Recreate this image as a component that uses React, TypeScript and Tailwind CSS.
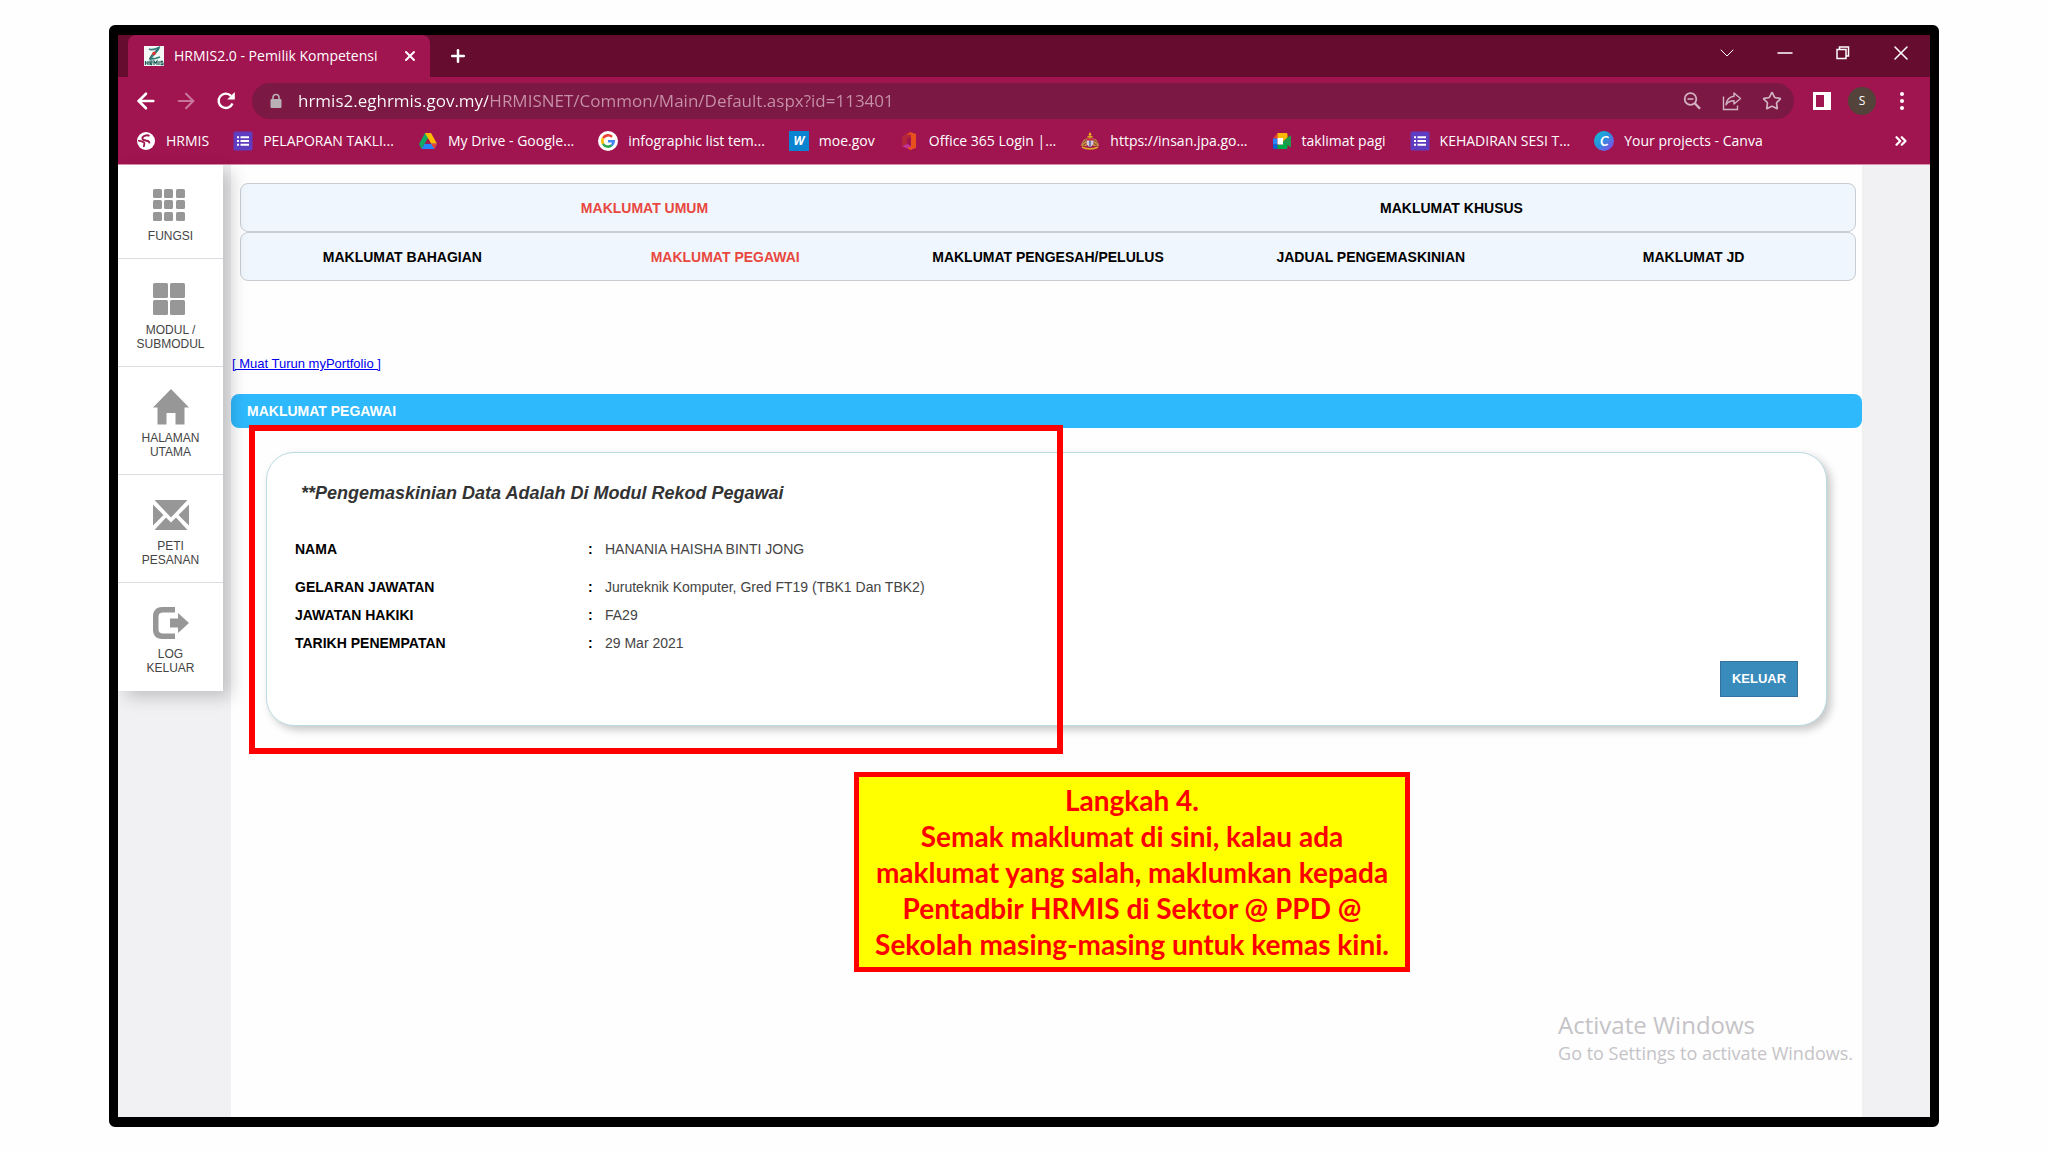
import type { ReactNode } from 'react';
import { ArrowLeft, ArrowRight, ChevronDown, ChevronsRight, Minus, Plus, Star, X } from 'lucide-react';
import clsx from 'clsx';

const mainTabs = [
  { label: 'MAKLUMAT UMUM', active: true },
  { label: 'MAKLUMAT KHUSUS', active: false },
];

const subTabs = [
  { label: 'MAKLUMAT BAHAGIAN', active: false },
  { label: 'MAKLUMAT PEGAWAI', active: true },
  { label: 'MAKLUMAT PENGESAH/PELULUS', active: false },
  { label: 'JADUAL PENGEMASKINIAN', active: false },
  { label: 'MAKLUMAT JD', active: false },
];

const details = [
  { label: 'NAMA', value: 'HANANIA HAISHA BINTI JONG' },
  { label: 'GELARAN JAWATAN', value: 'Juruteknik Komputer, Gred FT19 (TBK1 Dan TBK2)' },
  { label: 'JAWATAN HAKIKI', value: 'FA29' },
  { label: 'TARIKH PENEMPATAN', value: '29 Mar 2021' },
];

/* ---------- bookmark icons ---------- */

function GlobeIcon() {
  return (
    <svg viewBox="0 0 20 20" className="size-5">
      <circle cx="10" cy="10" r="9" fill="#fff" />
      <path d="M13.500 5C11.500 3.800 7.500 4.300 6.500 6.500c-.8 2.500 1.500 3 4 3.200 2 .2 3 .8 2.800 2.600" fill="none" stroke="#a0144f" strokeWidth="2" />
      <path d="M2 9.500c2 .6 5 .6 6.200 2.200.8 1.500-.7 2.300-.2 4.300" fill="none" stroke="#a0144f" strokeWidth="1.800" />
    </svg>
  );
}

function FormsIcon() {
  return (
    <svg viewBox="0 0 20 20" className="size-5">
      <rect x="0.500" y="0.500" width="19" height="19" rx="1.500" fill="#5f3dc0" />
      <path d="M7.500 6.200h8.500M7.500 10h8.500M7.500 13.800h8.500" stroke="#fff" strokeWidth="2" />
      <path d="M4 6.200h2M4 10h2M4 13.800h2" stroke="#fff" strokeWidth="2" />
    </svg>
  );
}

function DriveIcon() {
  return (
    <svg viewBox="0 0 20 20" className="size-5">
      <path d="M7 2h6l-6.500 11.300L3.600 18 1 13z" fill="#11a861" />
      <path d="M7 2h6l6 10.800h-6z" fill="#ffba00" />
      <path d="M6.700 12.800H19L16.300 18H3.600z" fill="#2684fc" />
      <path d="M13 12.800h6L16.300 18z" fill="#ea4335" />
      <path d="M10 7.400l3 5.400H7z" fill="#a0144f" />
    </svg>
  );
}

function GoogleIcon() {
  return (
    <svg viewBox="0 0 20 20" className="size-5">
      <circle cx="10" cy="10" r="10" fill="#fff" />
      <g fill="none" strokeWidth="2.600">
        <path d="M5.100 7.200A5.700 5.700 0 0 1 14 5.900" stroke="#ea4335" />
        <path d="M5.100 12.800a5.700 5.700 0 0 1 0-5.600" stroke="#fbbc05" />
        <path d="M13.700 14.300a5.700 5.700 0 0 1-8.600-1.500" stroke="#34a853" />
        <path d="M10 10.200h5.700a5.700 5.700 0 0 1-2 4.100" stroke="#4285f4" />
      </g>
    </svg>
  );
}

function WordpadIcon() {
  return (
    <span className="flex size-5 items-center justify-center bg-[#0a84d0] font-['Open_Sans',sans-serif] text-xs font-bold italic text-white">W</span>
  );
}

function OfficeIcon() {
  return (
    <svg viewBox="0 0 20 20" className="size-5">
      <path d="M3 5.500 9.500 1 12 2v4L8 7.500v6l-5 2z" fill="#b3263a" />
      <path d="M3 15.500 8 13l5 2.500V19z" fill="#c2339b" />
      <path d="M11 1l6 2v14l-6 2-3-2.500 4-.5V3.500L8 4z" fill="#e8501c" />
    </svg>
  );
}

function CrestIcon() {
  return (
    <svg viewBox="0 0 20 20" className="size-5">
      <path d="M10 1l1.500 3h-3z" fill="#f2c21a" />
      <path d="M6.500 6 10 4l3.500 2-3.500 1z" fill="#e0a31c" />
      <path d="M1 15c.5-3.500 2-6 4.500-7.500L7 15zM19 15c-.5-3.500-2-6-4.500-7.500L13 15z" fill="#c98a4a" />
      <path d="M2.500 12l3.500-3M3 14.500l3.500-2.500M17.500 12 14 9M17 14.500 13.500 12" stroke="#6b4423" strokeWidth="0.900" />
      <path d="M6.500 7.500h7v4.500c0 2-2 3.500-3.500 4-1.500-.5-3.500-2-3.500-4z" fill="#d9c9d4" />
      <path d="M6.500 7.500h7v2h-7z" fill="#c62828" />
      <path d="M10 9.500v6" stroke="#4a5aa8" strokeWidth="1.500" />
      <path d="M2 16c4 2.500 12 2.500 16 0" fill="none" stroke="#dba52a" strokeWidth="1.800" />
    </svg>
  );
}

function MeetIcon() {
  return (
    <svg viewBox="0 0 20 20" className="size-5">
      <path d="M1 7.500 5.500 2v5.500z" fill="#ea4335" />
      <path d="M1 7.500h4.500v6H1z" fill="#2684fc" />
      <path d="M1 13.500h4.500V18H2.500A1.500 1.500 0 0 1 1 16.500z" fill="#0066da" />
      <path d="M5.500 2H14c1 0 1.500.7 1.500 1.500v5L11 11V7H5.500z" fill="#ffba00" />
      <path d="M5.500 13.500H11v-3l4.500 3v3c0 1-.6 1.500-1.500 1.500H5.500z" fill="#00ac47" />
      <path d="M11 10.200 18 4.500c.5-.3 1 0 1 .5v10.500c0 .5-.5.700-1 .4z" fill="#1f9a48" />
      <path d="M5.500 7H11v6.500H5.500z" fill="#fff" />
    </svg>
  );
}

function CanvaIcon() {
  return (
    <span className="flex size-5 items-center justify-center rounded-full bg-linear-to-br from-[#00c4cc] via-[#2a8be0] to-[#7d2ae8] font-['Lato',sans-serif] text-sm font-bold italic text-white">C</span>
  );
}

const bookmarks: { label: string; icon: ReactNode }[] = [
  { label: 'HRMIS', icon: <GlobeIcon /> },
  { label: 'PELAPORAN TAKLI...', icon: <FormsIcon /> },
  { label: 'My Drive - Google...', icon: <DriveIcon /> },
  { label: 'infographic list tem...', icon: <GoogleIcon /> },
  { label: 'moe.gov', icon: <WordpadIcon /> },
  { label: 'Office 365 Login |...', icon: <OfficeIcon /> },
  { label: 'https://insan.jpa.go...', icon: <CrestIcon /> },
  { label: 'taklimat pagi', icon: <MeetIcon /> },
  { label: 'KEHADIRAN SESI T...', icon: <FormsIcon /> },
  { label: 'Your projects - Canva', icon: <CanvaIcon /> },
];

/* ---------- browser chrome ---------- */

function Favicon() {
  return (
    <svg viewBox="0 0 20 20" className="size-5">
      <rect width="20" height="20" fill="#f4f7f6" />
      <path d="M5 3c3 1.500 6 .5 10-1.500C14 6 8 9 6.500 13c2.500 0 6-.5 9.500-2" fill="none" stroke="#2f7f78" strokeWidth="1.800" />
      <path d="M13.500 3.500C10 6 7 9 5.500 13" fill="none" stroke="#24404a" strokeWidth="1" />
      <circle cx="10" cy="7.500" r="1.800" fill="#e3322b" />
      <path d="M1.500 15v4M4 15v4M1.500 17H4M6 19v-4h2v2H6l2 2M10 19v-4l1.500 2 1.500-2v4M15 15v4M19 15.300h-2v1.700h2v1.700h-2.500" fill="none" stroke="#1d5f58" strokeWidth="1.200" />
    </svg>
  );
}

function ReloadIcon() {
  return (
    <svg viewBox="0 0 20 20" className="size-5">
      <path d="M16.500 12.500A7.200 7.200 0 1 1 15 4.800" fill="none" stroke="#fff" strokeWidth="2.400" />
      <path d="M18.800 1v7.600h-7.600z" fill="#fff" />
    </svg>
  );
}

function ZoomIcon() {
  return (
    <svg viewBox="0 0 20 20" className="size-5" fill="none" stroke="currentColor">
      <circle cx="8.500" cy="8" r="5.800" strokeWidth="1.800" />
      <path d="M5.500 8h6" strokeWidth="1.600" />
      <path d="M12.800 12.300 18 17.800" strokeWidth="2.400" />
    </svg>
  );
}

function ShareIcon() {
  return (
    <svg viewBox="0 0 20 20" className="size-5" fill="none" stroke="currentColor" strokeWidth="1.400">
      <path d="M1.500 5.500v13h14v-4" />
      <path d="M12 2l6.500 5.500L12 13v-3.200c-3.500 0-6 1-8 4 .5-4.500 3.500-8 8-8.600z" strokeLinejoin="round" />
    </svg>
  );
}

function TabStrip() {
  return (
    <div className="flex h-[42px] items-stretch justify-between bg-[#660c2e] text-white">
      <div className="flex pl-[10px]">
        <div className="flex w-[302px] items-center rounded-t-lg bg-[#a0144f] pl-4 pr-3">
          <Favicon />
          <span className="ml-[10px] flex-1 whitespace-nowrap text-sm">HRMIS2.0 - Pemilik Kompetensi</span>
          <button type="button" aria-label="Close tab">
            <X className="size-4" strokeWidth={3} />
          </button>
        </div>
        <button type="button" aria-label="New tab" className="ml-[18px]">
          <Plus className="size-5" strokeWidth={3} />
        </button>
      </div>
      <div className="flex items-center gap-[34px] pr-[17px] pb-[6px]">
        <button type="button" aria-label="Search tabs">
          <ChevronDown className="size-6" strokeWidth={1} />
        </button>
        <button type="button" aria-label="Minimise">
          <Minus className="size-6" strokeWidth={1.5} />
        </button>
        <button type="button" aria-label="Restore">
          <svg viewBox="0 0 24 24" className="size-6" fill="none" stroke="currentColor" strokeWidth="1.500">
            <path d="M6 8.500h9v9H6z" />
            <path d="M8.500 8.500V6h9v9H15" />
          </svg>
        </button>
        <button type="button" aria-label="Close">
          <X className="size-6" strokeWidth={1.5} />
        </button>
      </div>
    </div>
  );
}

function Toolbar() {
  return (
    <div className="flex h-[46px] items-center px-[18px] pt-[2px] text-white">
      <div className="flex items-center gap-5">
        <button type="button" aria-label="Back">
          <ArrowLeft className="size-5 scale-125" strokeWidth={2.5} />
        </button>
        <button type="button" aria-label="Forward" className="text-[#c9759a]">
          <ArrowRight className="size-5 scale-125" strokeWidth={2} />
        </button>
        <button type="button" aria-label="Reload">
          <ReloadIcon />
        </button>
      </div>
      <div className="ml-4 flex h-9 flex-1 items-center rounded-full bg-[#7b1843] pl-[18px] pr-3 text-[#d3b3c2]">
        <svg viewBox="0 0 12 16" className="h-4 w-3">
          <path d="M3 7V4.500a3 3 0 0 1 6 0V7" fill="none" stroke="#b9b0b6" strokeWidth="1.600" />
          <rect x="0.500" y="6" width="11" height="9" rx="1" fill="#b9b0b6" />
        </svg>
        <input
          type="text"
          aria-label="Address"
          readOnly
          value="hrmis2.eghrmis.gov.my/HRMISNET/Common/Main/Default.aspx?id=113401"
          className="ml-4 min-w-0 flex-1 bg-linear-to-r from-white from-[190px] to-[#c791ab] to-[190px] bg-clip-text text-[17px] leading-6 text-transparent outline-none"
        />
        <div className="flex items-center gap-5">
          <button type="button" aria-label="Zoom">
            <ZoomIcon />
          </button>
          <button type="button" aria-label="Share">
            <ShareIcon />
          </button>
          <button type="button" aria-label="Bookmark this page">
            <Star className="size-5" strokeWidth={2} />
          </button>
        </div>
      </div>
      <div className="ml-[18px] flex items-center gap-4">
        <button type="button" aria-label="Side panel">
          <svg viewBox="0 0 20 20" className="size-5">
            <path d="M1 1h18v18H1zM4 4v12h8V4z" fill="#fff" fillRule="evenodd" />
          </svg>
        </button>
        <button type="button" aria-label="Profile" className="size-7 rounded-full bg-[#54433a] text-xs">
          S
        </button>
        <button type="button" aria-label="Menu">
          <svg viewBox="0 0 20 20" className="size-5" fill="#fff">
            <circle cx="10" cy="3" r="2" />
            <circle cx="10" cy="10" r="2" />
            <circle cx="10" cy="17" r="2" />
          </svg>
        </button>
      </div>
    </div>
  );
}

function BookmarkBar() {
  return (
    <div className="flex h-[41px] items-center justify-between pb-[6px] pl-[18px] pr-5 text-white">
      <div className="flex items-center gap-6">
        {bookmarks.map((item) => (
          <a key={item.label} href="#" className="flex items-center gap-[10px] whitespace-nowrap text-sm">
            {item.icon}
            {item.label}
          </a>
        ))}
      </div>
      <button type="button" aria-label="More bookmarks">
        <ChevronsRight className="size-[18px]" strokeWidth={3} />
      </button>
    </div>
  );
}

/* ---------- side menu ---------- */

const sideMenu: { lines: string[]; icon: ReactNode }[] = [
  {
    lines: ['FUNGSI'],
    icon: (
      <svg viewBox="0 0 32 32" className="size-8" fill="#979797">
        {[0, 11, 23].map((y) =>
          [0, 11, 23].map((x) => <rect key={`${x}-${y}`} x={x} y={y} width="9" height="9" rx="1.500" />)
        )}
      </svg>
    ),
  },
  {
    lines: ['MODUL /', 'SUBMODUL'],
    icon: (
      <svg viewBox="0 0 32 32" className="size-8" fill="#979797">
        <rect width="15" height="15" rx="1.500" />
        <rect x="17" width="15" height="15" rx="1.500" />
        <rect y="17" width="15" height="15" rx="1.500" />
        <rect x="17" y="17" width="15" height="15" rx="1.500" />
      </svg>
    ),
  },
  {
    lines: ['HALAMAN', 'UTAMA'],
    icon: (
      <svg viewBox="0 0 36 36" className="size-9" fill="#979797">
        <path d="M18 0 36 18.500h-4.500V35.500H22.500V24h-9v11.500H4.500V18.500H0z" />
      </svg>
    ),
  },
  {
    lines: ['PETI', 'PESANAN'],
    icon: (
      <svg viewBox="0 0 36 30" className="h-[30px] w-9" fill="#979797">
        <path d="M1.500 0h33L18 17.500z" />
        <path d="M0 4.500 10.500 15 0 25.500zM36 4.500 25.500 15 36 25.500z" />
        <path d="M1.500 30 13 17.500l5 5 5-5L34.500 30z" />
      </svg>
    ),
  },
  {
    lines: ['LOG', 'KELUAR'],
    icon: (
      <svg viewBox="0 0 36 32" className="h-8 w-9" fill="#979797">
        <path d="M22 0v5.500H10C7 5.500 5.500 7 5.500 9.500v13C5.500 25 7 26.500 10 26.500h12V32H9c-6 0-9-4-9-9V9c0-5 3-9 9-9z" />
        <path d="M17 11.500h8V6l11 10-11 10v-5.500h-8z" />
      </svg>
    ),
  },
];

function SideMenu() {
  return (
    <nav className="relative z-10 w-[105px] shrink-0 bg-white shadow-[8px_6px_16px_rgba(0,0,0,0.2)]">
      {sideMenu.map((item) => (
        <a
          key={item.lines[0]}
          href="#"
          className="flex flex-col items-center border-b border-[#dcdce2] pb-[15px] pt-5 text-center text-xs leading-[14px] text-[#444] last:border-transparent"
        >
          <span className="mb-1 flex h-10 w-9 items-center">{item.icon}</span>
          {item.lines.map((line) => (
            <span key={line}>{line}</span>
          ))}
        </a>
      ))}
    </nav>
  );
}

/* ---------- page ---------- */

function TabRow({ tabs }: { tabs: { label: string; active: boolean }[] }) {
  return (
    <div className="flex h-[49px] items-center rounded-lg border border-[#c9cdd1] bg-[#f0f6fd]">
      {tabs.map((tab) => (
        <a
          key={tab.label}
          href="#"
          className={clsx('flex-1 text-center font-bold', tab.active ? 'text-[#e8483f]' : 'text-black')}
        >
          {tab.label}
        </a>
      ))}
    </div>
  );
}

function OfficerCard() {
  return (
    <div className="mx-[35px] mt-6 rounded-[28px] border border-[#b9dbe2] bg-white p-7 shadow-[4px_4px_8px_rgba(0,0,0,0.22)]">
      <h2 className="pl-[6px] text-lg leading-6 font-bold italic text-[#333]">
        **Pengemaskinian Data Adalah Di Modul Rekod Pegawai
      </h2>
      <dl className="mt-[34px] flex flex-col gap-2 leading-5">
        {details.map((row) => (
          <div key={row.label} className="flex first:mb-[10px]">
            <dt className="flex w-[310px] font-bold text-black">
              <span className="w-[293px]">{row.label}</span>:
            </dt>
            <dd className="text-[#444]">{row.value}</dd>
          </div>
        ))}
      </dl>
      <div className="mt-2 flex justify-end">
        <button type="button" className="h-9 w-[78px] border border-[#35719c] bg-[#398bbb] text-[13px] font-bold text-white">
          KELUAR
        </button>
      </div>
    </div>
  );
}

function Callout() {
  return (
    <div className="absolute left-[623px] top-[378px] w-[556px] border-5 border-[#f00] bg-[#ff0] py-[5px] text-center font-['Lato',sans-serif] text-[28px] leading-9 font-bold whitespace-nowrap text-[#f00]">
      <p>Langkah 4.</p>
      <p>
        Semak maklumat di sini, kalau ada
        <br />
        maklumat yang salah, maklumkan kepada
        <br />
        Pentadbir HRMIS di Sektor @ PPD @
        <br />
        Sekolah masing-masing untuk kemas kini.
      </p>
    </div>
  );
}

export default function App() {
  return (
    <div className="flex min-h-screen flex-col bg-[#fefefe] px-[109px] py-[25px]">
      <div className="relative flex flex-1 flex-col rounded-md border-x-9 border-y-10 border-black bg-[#f1f0f3]">
        <header className="border-b border-[#d98fb0] bg-[#a0144f] font-['Open_Sans',sans-serif]">
          <TabStrip />
          <Toolbar />
          <BookmarkBar />
        </header>

        <div className="flex flex-1 items-start font-['Liberation_Sans',Arial,sans-serif] text-sm">
          <SideMenu />
          <main className="ml-2 mr-[68px] flex-1 self-stretch bg-[#fefefe]">
            <div className="pl-[9px] pr-[6px] pt-[18px]">
              <TabRow tabs={mainTabs} />
              <TabRow tabs={subTabs} />
            </div>
            <a href="#" className="mb-5 ml-px mt-[73px] block w-fit text-[13px] leading-5 text-[#0000ee] underline">
              [ Muat Turun myPortfolio ]
            </a>
            <section className="relative">
              <h1 className="h-[34px] rounded-lg bg-[#2fb9fd] px-4 leading-[34px] font-bold text-white">MAKLUMAT PEGAWAI</h1>
              <OfficerCard />
              <div className="absolute left-[18px] top-[31px] h-[329px] w-[814px] border-6 border-[#f00]" />
              <Callout />
            </section>
          </main>
        </div>

        <div className="absolute bottom-[50px] right-[77px] font-['Open_Sans',sans-serif] text-[#c5c3c7]">
          <p className="text-2xl leading-7">Activate Windows</p>
          <p className="text-lg leading-7">Go to Settings to activate Windows.</p>
        </div>
      </div>
    </div>
  );
}
